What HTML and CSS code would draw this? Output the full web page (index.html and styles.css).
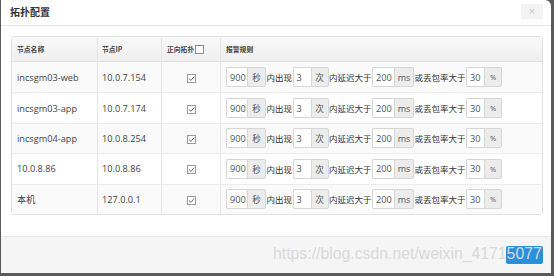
FILE: index.html
```html
<!DOCTYPE html>
<html lang="zh">
<head>
<meta charset="utf-8">
<title>拓扑配置</title>
<link rel="stylesheet" href="styles.css">
</head>
<body>
<div class="modal">
  <div class="modal-header">
    <h4 class="title">拓扑配置</h4>
    <button class="close" type="button">×</button>
  </div>
  <div class="modal-body">
    <table class="grid">
      <thead>
        <tr>
          <th class="c1">节点名称</th>
          <th class="c2">节点IP</th>
          <th class="c3"><span class="th-check">正向拓扑<span class="cb"></span></span></th>
          <th class="c4">报警规则</th>
        </tr>
      </thead>
      <tbody>
        <tr class="odd">
          <td class="c1">incsgm03-web</td>
          <td class="c2">10.0.7.154</td>
          <td class="c3"><span class="cb checked"><svg viewBox="0 0 9 9" width="9" height="9"><path d="M2 4.6 L3.9 6.4 L7.2 2.6" fill="none" stroke="#555" stroke-width="0.9"/></svg></span></td>
          <td class="c4"><div class="rule"><span class="ig"><span class="inp i900">900</span><span class="add a-s">秒</span></span><span class="lbl">内出现</span><span class="ig"><span class="inp i3">3</span><span class="add a-c">次</span></span><span class="lbl">内延迟大于</span><span class="ig"><span class="inp i200">200</span><span class="add a-ms">ms</span></span><span class="lbl">或丢包率大于</span><span class="ig"><span class="inp i30">30</span><span class="add a-p">%</span></span></div></td>
        </tr>
        <tr class="even">
          <td class="c1">incsgm03-app</td>
          <td class="c2">10.0.7.174</td>
          <td class="c3"><span class="cb checked"><svg viewBox="0 0 9 9" width="9" height="9"><path d="M2 4.6 L3.9 6.4 L7.2 2.6" fill="none" stroke="#555" stroke-width="0.9"/></svg></span></td>
          <td class="c4"><div class="rule"><span class="ig"><span class="inp i900">900</span><span class="add a-s">秒</span></span><span class="lbl">内出现</span><span class="ig"><span class="inp i3">3</span><span class="add a-c">次</span></span><span class="lbl">内延迟大于</span><span class="ig"><span class="inp i200">200</span><span class="add a-ms">ms</span></span><span class="lbl">或丢包率大于</span><span class="ig"><span class="inp i30">30</span><span class="add a-p">%</span></span></div></td>
        </tr>
        <tr class="odd">
          <td class="c1">incsgm04-app</td>
          <td class="c2">10.0.8.254</td>
          <td class="c3"><span class="cb checked"><svg viewBox="0 0 9 9" width="9" height="9"><path d="M2 4.6 L3.9 6.4 L7.2 2.6" fill="none" stroke="#555" stroke-width="0.9"/></svg></span></td>
          <td class="c4"><div class="rule"><span class="ig"><span class="inp i900">900</span><span class="add a-s">秒</span></span><span class="lbl">内出现</span><span class="ig"><span class="inp i3">3</span><span class="add a-c">次</span></span><span class="lbl">内延迟大于</span><span class="ig"><span class="inp i200">200</span><span class="add a-ms">ms</span></span><span class="lbl">或丢包率大于</span><span class="ig"><span class="inp i30">30</span><span class="add a-p">%</span></span></div></td>
        </tr>
        <tr class="even">
          <td class="c1">10.0.8.86</td>
          <td class="c2">10.0.8.86</td>
          <td class="c3"><span class="cb checked"><svg viewBox="0 0 9 9" width="9" height="9"><path d="M2 4.6 L3.9 6.4 L7.2 2.6" fill="none" stroke="#555" stroke-width="0.9"/></svg></span></td>
          <td class="c4"><div class="rule"><span class="ig"><span class="inp i900">900</span><span class="add a-s">秒</span></span><span class="lbl">内出现</span><span class="ig"><span class="inp i3">3</span><span class="add a-c">次</span></span><span class="lbl">内延迟大于</span><span class="ig"><span class="inp i200">200</span><span class="add a-ms">ms</span></span><span class="lbl">或丢包率大于</span><span class="ig"><span class="inp i30">30</span><span class="add a-p">%</span></span></div></td>
        </tr>
        <tr class="odd">
          <td class="c1">本机</td>
          <td class="c2">127.0.0.1</td>
          <td class="c3"><span class="cb checked"><svg viewBox="0 0 9 9" width="9" height="9"><path d="M2 4.6 L3.9 6.4 L7.2 2.6" fill="none" stroke="#555" stroke-width="0.9"/></svg></span></td>
          <td class="c4"><div class="rule"><span class="ig"><span class="inp i900">900</span><span class="add a-s">秒</span></span><span class="lbl">内出现</span><span class="ig"><span class="inp i3">3</span><span class="add a-c">次</span></span><span class="lbl">内延迟大于</span><span class="ig"><span class="inp i200">200</span><span class="add a-ms">ms</span></span><span class="lbl">或丢包率大于</span><span class="ig"><span class="inp i30">30</span><span class="add a-p">%</span></span></div></td>
        </tr>
      </tbody>
    </table>
  </div>
  <div class="modal-footer">
    <button class="btn-primary" type="button"></button>
    <span class="watermark">https://blog.csdn.net/weixin_41715077</span>
  </div>
</div>
</body>
</html>
```

FILE: styles.css
```css
* { box-sizing: border-box; }

html, body {
  margin: 0;
  padding: 0;
  width: 554px;
  height: 276px;
  overflow: hidden;
}

body {
  background: #5a5a5a;
  padding: 0 3px 3px 1px;
  font-family: "Open Sans", "Noto Sans CJK SC", sans-serif;
  color: #333;
}

.modal {
  background: #fff;
  width: 550px;
  height: 273px;
  border-radius: 0 6px 0 0;
  display: flex;
  flex-direction: column;
  overflow: hidden;
}

.modal-header {
  height: 26px;
  border-bottom: 1px solid #e8e8e8;
  display: flex;
  align-items: center;
  justify-content: space-between;
  padding: 0 9px 0 9px;
  flex: none;
}

.title {
  margin: 0;
  font-family: "Noto Sans CJK SC", sans-serif;
  font-size: 10px;
  font-weight: 700;
  color: #333;
  line-height: 1;
  margin-top: -1px;
}

.close {
  width: 22px;
  height: 15px;
  border: 0;
  background: #f3f3f3;
  color: #c4c4c4;
  font-size: 11px;
  line-height: 15px;
  padding: 0;
  margin-top: -2px;
  margin-right: -1px;
  font-family: "Liberation Sans", sans-serif;
}

.modal-body {
  flex: 1;
  padding: 10px 8px 0 10px;
}

.grid {
  width: 532px;
  border-collapse: separate;
  border-spacing: 0;
  border: 1px solid #e2e2e2;
  border-radius: 3px;
  table-layout: fixed;
}

.grid th, .grid td {
  border-right: 1px solid #e6e6e6;
  border-top: 1px solid #ececec;
  padding: 0 0 0 5px;
  text-align: left;
  vertical-align: middle;
}

.grid th:last-child, .grid td:last-child { border-right: 0; }

.grid thead th {
  border-top: 0;
  height: 25px;
  background: linear-gradient(#f9f9f9, #efefef);
  font-family: "Noto Sans CJK SC", sans-serif;
  font-size: 6.8px;
  font-weight: 700;
  color: #444;
  border-bottom: 1px solid #e0e0e0;
}

.grid tbody tr:first-child td { border-top: 0; }

.grid th.c1, .grid td.c1 { width: 86px; }
.grid th.c2, .grid td.c2 { width: 64px; padding-left: 4px; }
.grid th.c3, .grid td.c3 { width: 59px; }
.grid td.c3 { text-align: center; padding-left: 0; }

.grid td {
  height: 30.4px;
  font-size: 9.2px;
  color: #444;
}

.grid tr.odd td { background: #fafafa; }
.grid tr.even td { background: #fff; }

.th-check {
  display: inline-flex;
  align-items: center;
  gap: 1px;
}

.cb {
  display: inline-block;
  width: 9px;
  height: 9px;
  border: 1px solid #8a8a8a;
  background: #fff;
  vertical-align: middle;
  position: relative;
}

.cb.checked {
  border-color: #9a9a9a;
}

.cb svg {
  position: absolute;
  left: -1px;
  top: -1px;
}

.rule {
  display: flex;
  align-items: center;
  font-family: "Noto Sans CJK SC", sans-serif;
  font-size: 8.5px;
  color: #333;
}

.ig {
  display: flex;
  height: 20px;
}

.inp {
  background: #fff;
  border: 1px solid #d6d6d6;
  border-right: 0;
  border-radius: 2px 0 0 2px;
  font-family: "Open Sans", sans-serif;
  font-size: 9.2px;
  color: #555;
  display: flex;
  align-items: center;
  padding-left: 3px;
}

.add {
  background: #ececec;
  border: 1px solid #d6d6d6;
  border-radius: 0 2px 2px 0;
  display: flex;
  align-items: center;
  justify-content: center;
  font-size: 8.6px;
  color: #555;
}

.i900 { width: 21px; }
.i3 { width: 18px; }
.i200 { width: 22px; }
.i30 { width: 18px; }
.a-s { width: 19px; }
.a-c { width: 18px; }
.a-ms { width: 20px; font-family: "Open Sans", sans-serif; font-size: 9px; }
.a-p { width: 18px; font-family: "Open Sans", sans-serif; font-size: 7.5px; }

.lbl {
  padding: 0 0.5px;
  white-space: nowrap;
}

.modal-footer {
  flex: none;
  height: 37px;
  background: #f5f5f5;
  border-top: 1px solid #e8e8e8;
  display: flex;
  align-items: center;
  justify-content: flex-end;
  padding: 0 8px 0 0;
  position: relative;
}

.btn-primary {
  width: 37px;
  height: 18px;
  border: 0;
  border-radius: 2px;
  background: #2b90d9;
  padding: 0;
  margin-top: -1px;
}

.watermark {
  position: absolute;
  left: 272px;
  top: 6px;
  font-family: "Liberation Sans", sans-serif;
  font-size: 15.8px;
  color: #d9d9d9;
  white-space: nowrap;
  line-height: 22px;
  pointer-events: none;
}
```
